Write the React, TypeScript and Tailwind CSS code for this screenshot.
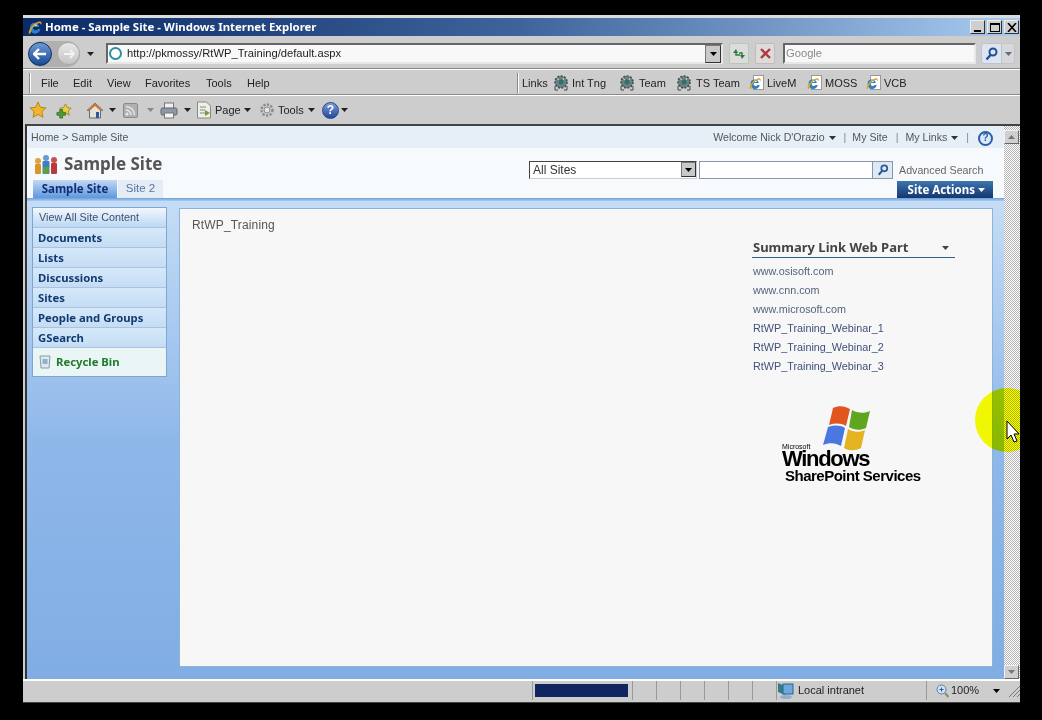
import { Fragment } from "react";

const bold = "font-['Noto_Sans',sans-serif] font-bold";

function Caret({ className = "" }: { className?: string }) {
  return (
    <svg width="7" height="4" viewBox="0 0 7 4" className={`shrink-0 ${className}`}>
      <path d="M0 0h7L3.5 4z" fill="currentColor" />
    </svg>
  );
}

function IeIcon({ size = 15 }: { size?: number }) {
  return (
    <svg width={size} height={size} viewBox="0 0 16 16" className="shrink-0">
      <path d="M2 8.5a5 5 0 0 1 10-1H5.2a3 3 0 0 0 5.4 2.2h2.5A5.4 5.4 0 0 1 2 8.5z" fill="#2f7fc8" />
      <path d="M5.4 6h4.3a2.2 2.2 0 0 0-4.3 0z" fill="#fff" />
      <path d="M1 14.5C-.5 11 6 3 11 1.8c3-.7 4.2.8 3 3.6-.4-2-1.8-2.4-3.5-1.8C7 4.8 3 10 2.8 14c-.6.8-1.4 1-1.8.5z" fill="#d9a520" />
    </svg>
  );
}

function GearPage() {
  return (
    <svg width="16" height="16" viewBox="0 0 16 16" className="shrink-0">
      <path d="M2 11v4h3M14 11v4h-3" fill="none" stroke="#444" strokeWidth="1" />
      <circle cx="8" cy="7" r="6" fill="#6d7f80" />
      <circle cx="8" cy="7" r="6" fill="none" stroke="#3e5052" strokeWidth="1.6" strokeDasharray="2 1.4" />
      <circle cx="8" cy="7" r="2.5" fill="#2f6f70" />
      <path d="M4 3.5l2 1.5M11 3l-1 2" stroke="#cfd6d6" strokeWidth="1" />
    </svg>
  );
}

function PageIe() {
  return (
    <div className="relative h-[16px] w-[16px] shrink-0">
      <div className="ml-[4px] h-[15px] w-[11px] border border-[#999] bg-white" />
      <div className="absolute left-0 top-[2px]">
        <IeIcon size={13} />
      </div>
    </div>
  );
}

function Grip() {
  return <div className="h-[20px] w-[2px] shrink-0 border-l border-r border-l-[#888] border-r-white" />;
}

function Combo({ className }: { className: string }) {
  return (
    <div className={`flex shrink-0 items-center justify-center border border-[#777] border-r-[#333] border-b-[#333] bg-[#c9c9c9] text-black ${className}`}>
      <Caret />
    </div>
  );
}

function TitleBar() {
  return (
    <div className="flex h-[18px] shrink-0 items-center bg-gradient-to-r from-[#0b2a66] via-[#3f649c] to-[#a9cdf0] pl-[5px] pr-[1px]">
      <IeIcon size={15} />
      <span className={`ml-[2px] flex-1 text-[11.4px] leading-none text-white ${bold}`}>Home - Sample Site - Windows Internet Explorer</span>
      <div className="flex gap-[2px]">
        {["min", "max", "close"].map((b) => (
          <div key={b} className="flex h-[14px] w-[15px] items-center justify-center border border-[#eee] border-r-[#333] border-b-[#333] bg-[#cfcfcf]">
            {b === "min" && <div className="mt-[7px] h-[2px] w-[7px] bg-black" />}
            {b === "max" && <div className="h-[9px] w-[10px] border border-t-2 border-black" />}
            {b === "close" && (
              <svg width="10" height="9" viewBox="0 0 10 9">
                <path d="M1 0l8 9M9 0L1 9" stroke="#000" strokeWidth="1.6" />
              </svg>
            )}
          </div>
        ))}
      </div>
    </div>
  );
}

function AddressBar() {
  return (
    <div className="flex h-[33px] shrink-0 items-center border-b border-b-[#8a8a8a] bg-[#cdcdcd] pl-[5px] pt-[3px] text-[11.2px] text-[#222]">
      <div className="flex h-[26px] w-[52px] shrink-0 items-center rounded-full bg-[#b0b0b0]">
        <div className="flex h-[24px] w-[24px] items-center justify-center rounded-full border border-[#12305f] bg-gradient-to-b from-[#6d9ad4] to-[#184a96]">
          <svg width="14" height="12" viewBox="0 0 14 12">
            <path d="M6 1L1 6l5 5M1 6h12" fill="none" stroke="#fff" strokeWidth="2.4" />
          </svg>
        </div>
        <div className="ml-[5px] flex h-[23px] w-[23px] items-center justify-center rounded-full border border-[#aaa] bg-gradient-to-b from-[#e8e8e8] to-[#c4c4c4]">
          <svg width="12" height="10" viewBox="0 0 12 10">
            <path d="M7 1l4 4-4 4M11 5H1" fill="none" stroke="#f3f3f3" strokeWidth="1.8" />
          </svg>
        </div>
      </div>
      <Caret className="ml-[7px] text-[#222]" />
      <div className="ml-[12px] flex h-[21px] w-[617px] shrink-0 items-center border-2 border-[#666] border-r-[#e8e8e8] border-b-[#e8e8e8] bg-[#f8f8f8]">
        <div className="ml-[1px] h-[13px] w-[13px] shrink-0 rounded-full border-2 border-[#2a8f9c] bg-white" />
        <span className="ml-[5px] flex-1">http://pkmossy/RtWP_Training/default.aspx</span>
        <Combo className="h-[18px] w-[16px]" />
      </div>
      <div className="ml-[6px] flex h-[21px] w-[20px] shrink-0 items-center justify-center rounded-[2px] border border-[#b8c8b8] bg-[#dcdcdc]">
        <svg width="14" height="12" viewBox="0 0 14 12">
          <path d="M1 5l3-4 2 4zM13 7l-3 4-2-4z" fill="#2f7d3a" />
          <path d="M4 5v2h4M10 7V5H7" stroke="#2f7d3a" strokeWidth="1.5" fill="none" />
        </svg>
      </div>
      <div className="ml-[6px] flex h-[21px] w-[20px] shrink-0 items-center justify-center rounded-[2px] border border-[#c8b8b8] bg-[#dcdcdc]">
        <svg width="11" height="11" viewBox="0 0 11 11">
          <path d="M1 1l9 9M10 1l-9 9" stroke="#b33a3a" strokeWidth="2.4" />
        </svg>
      </div>
      <div className="ml-[8px] flex h-[21px] w-[193px] shrink-0 items-center border-2 border-[#666] border-r-[#e8e8e8] border-b-[#e8e8e8] bg-[#f8f8f8] pl-[1px] text-[#8a8a8a]">
        Google
      </div>
      <div className="ml-[5px] flex h-[21px] w-[21px] shrink-0 items-center justify-center rounded-l-[3px] border border-[#b8c4d8] bg-[#dfe5ef]">
        <svg width="13" height="14" viewBox="0 0 13 14">
          <circle cx="8" cy="5" r="3.5" fill="none" stroke="#1f4f9a" strokeWidth="2" />
          <path d="M5.5 8L1.5 12.5" stroke="#1f4f9a" strokeWidth="2.4" />
        </svg>
      </div>
      <div className="flex h-[21px] w-[13px] shrink-0 items-center justify-center rounded-r-[3px] border border-l-0 border-[#c4c4c4] bg-[#d8d8d8] text-[#5a6f90]">
        <Caret />
      </div>
    </div>
  );
}

function MenuBar() {
  return (
    <div className="flex h-[26px] shrink-0 items-center border-b border-t border-b-[#8a8a8a] border-t-white bg-[#cdcdcd] pl-[6px] pt-[2px] text-[11px] text-[#222]">
      <Grip />
      <span className="ml-[10px] w-[32px]">File</span>
      <span className="w-[34px]">Edit</span>
      <span className="w-[38px]">View</span>
      <span className="w-[61px]">Favorites</span>
      <span className="w-[41px]">Tools</span>
      <span className="w-[270px]">Help</span>
      <Grip />
      <span className="ml-[3px] w-[31px]">Links</span>
      <div className="flex w-[66px] items-center gap-[3px]"><GearPage /><span>Int Tng</span></div>
      <div className="flex w-[57px] items-center gap-[4px]"><GearPage /><span>Team</span></div>
      <div className="flex w-[73px] items-center gap-[4px]"><GearPage /><span>TS Team</span></div>
      <div className="flex w-[58px] items-center gap-[2px]"><PageIe /><span>LiveM</span></div>
      <div className="flex w-[59px] items-center gap-[2px]"><PageIe /><span>MOSS</span></div>
      <div className="flex w-[59px] items-center gap-[2px]"><PageIe /><span>VCB</span></div>
    </div>
  );
}

function CommandBar() {
  return (
    <div className="flex h-[29px] shrink-0 items-center border-t border-t-white bg-[#cdcdcd] pl-[6px] text-[11px] text-[#222]">
      <div className="w-[27px]">
        <svg width="18" height="18" viewBox="0 0 18 18">
          <path d="M9 1l2.4 5.3 5.6.6-4.2 3.8 1.2 5.6L9 13.4l-5 2.9 1.2-5.6L1 6.9l5.6-.6z" fill="#f2b62c" stroke="#b9851a" />
        </svg>
      </div>
      <div className="w-[30px]">
        <svg width="17" height="17" viewBox="0 0 18 18">
          <path d="M10 2l2 4 4 .5-3 3 1 4.5-4-2.4-4 2.4 1-4.5-3-3L8 6z" fill="#e8cf4a" stroke="#a5891c" />
          <path d="M1 11h3V8h3v3h3v3H7v3H4v-3H1z" fill="#4f9a3a" stroke="#2c6a20" strokeWidth=".8" />
        </svg>
      </div>
      <div className="w-[23px]">
        <svg width="18" height="17" viewBox="0 0 18 17">
          <path d="M9 1L1 8.5h2.5V16h11V8.5H17z" fill="#e6e2d6" stroke="#5f6f80" />
          <path d="M9 1L1 8.5h3L9 4l5 4.5h3z" fill="#c8763a" />
          <rect x="10" y="10" width="3" height="6" fill="#2d5a96" />
        </svg>
      </div>
      <div className="w-[14px]"><Caret /></div>
      <div className="w-[24px]">
        <svg width="15" height="15" viewBox="0 0 15 15">
          <rect x=".5" y=".5" width="14" height="14" rx="1.5" fill="#b0b0b0" stroke="#8a8a8a" />
          <circle cx="4" cy="11" r="1.5" fill="#e8e8e8" />
          <path d="M3 7a5 5 0 0 1 5 5M3 3.5a8.5 8.5 0 0 1 8.5 8.5" fill="none" stroke="#e8e8e8" strokeWidth="1.5" />
        </svg>
      </div>
      <div className="w-[13px]"><Caret className="text-[#888]" /></div>
      <div className="w-[24px]">
        <svg width="18" height="17" viewBox="0 0 18 17">
          <rect x="4.5" y="1" width="9" height="6" fill="#f0f0f0" stroke="#777" />
          <rect x="1" y="6" width="16" height="7" rx="1.5" fill="#8f98a3" stroke="#5d6570" />
          <rect x="4.5" y="11" width="9" height="5" fill="#f4f4f4" stroke="#777" />
        </svg>
      </div>
      <div className="w-[12px]"><Caret /></div>
      <div className="w-[19px]">
        <svg width="16" height="18" viewBox="0 0 16 18">
          <path d="M1.5 1h9l4 4v12h-13z" fill="#efefe6" stroke="#8a8a7a" />
          <path d="M4 6h6M4 9h5M4 12h6" stroke="#6f8f9f" />
          <path d="M9 9l5 3-5 3z" fill="#7a9a3a" />
        </svg>
      </div>
      <span className="w-[29px]">Page</span>
      <div className="w-[15px]"><Caret /></div>
      <div className="w-[19px]">
        <svg width="16" height="16" viewBox="0 0 16 16">
          <circle cx="8" cy="8" r="5.5" fill="#cfcfcf" stroke="#8a8a8a" strokeWidth="2.4" strokeDasharray="2.2 1.4" />
          <circle cx="8" cy="8" r="3" fill="#e3e3e3" stroke="#8a8a8a" />
        </svg>
      </div>
      <span className="w-[30px]">Tools</span>
      <div className="w-[14px]"><Caret /></div>
      <div className="flex h-[17px] w-[17px] items-center justify-center rounded-full border border-[#2a4a8a] bg-gradient-to-b from-[#7f9cd8] to-[#23489a] text-[12px] font-bold leading-none text-white">?</div>
      <Caret className="ml-[2px]" />
    </div>
  );
}

function SiteHeader() {
  return (
    <Fragment>
      <div className="flex h-[22px] shrink-0 items-center bg-[#e6eff7] pl-[4px] pr-[11px] pt-[2px] text-[10.6px] text-[#555]">
        <span className="flex-1">Home &gt; Sample Site</span>
        <span>Welcome Nick D'Orazio</span>
        <Caret className="ml-[4px] text-[#333]" />
        <span className="ml-[8px] text-[#888]">|</span>
        <span className="ml-[6px]">My Site</span>
        <span className="ml-[8px] text-[#888]">|</span>
        <span className="ml-[7px]">My Links</span>
        <Caret className="ml-[4px] text-[#333]" />
        <span className="ml-[8px] text-[#888]">|</span>
        <div className="ml-[9px] flex h-[15px] w-[15px] items-center justify-center rounded-full border-2 border-[#2a5fa8] bg-[#dceaf7] text-[10px] font-bold leading-none text-[#2a5fa8]">?</div>
      </div>
      <div className="flex h-[32px] shrink-0 items-center bg-[#f7fafd] pl-[6px]">
        <svg width="26" height="22" viewBox="0 0 26 22" className="shrink-0">
          <circle cx="5" cy="8" r="3" fill="#e0a33a" />
          <rect x="2" y="11" width="6" height="10" rx="1" fill="#d9952c" />
          <circle cx="13" cy="5" r="3" fill="#6a9ad0" />
          <rect x="9.5" y="8" width="7" height="13" rx="1" fill="#3f7fc0" />
          <circle cx="21" cy="7" r="3" fill="#c85050" />
          <rect x="18" y="10" width="6" height="11" rx="1" fill="#b83a3a" />
          <rect x="10" y="14" width="6" height="7" fill="#5aa04a" />
        </svg>
        <span className={`mb-[2px] ml-[5px] w-[465px] shrink-0 text-[17px] leading-none text-[#555] ${bold}`}>Sample Site</span>
        <div className="mt-[11px] flex h-[18px] w-[168px] shrink-0 items-center justify-between border border-[#444] border-r-[#ccc] border-b-[#ccc] bg-white pl-[3px] text-[12px] text-[#333]">
          All Sites
          <Combo className="h-[15px] w-[15px]" />
        </div>
        <div className="ml-[2px] mt-[11px] h-[18px] w-[174px] shrink-0 border border-[#8a96a3] bg-white" />
        <div className="mt-[11px] flex h-[18px] w-[20px] shrink-0 items-center justify-center border border-l-0 border-[#8a96a3] bg-[#dde9f5]">
          <svg width="12" height="12" viewBox="0 0 13 14">
            <circle cx="8" cy="5" r="3.5" fill="none" stroke="#2a5a94" strokeWidth="2" />
            <path d="M5.5 8L1.5 12.5" stroke="#2a5a94" strokeWidth="2.4" />
          </svg>
        </div>
        <span className="ml-[6px] mt-[12px] whitespace-nowrap text-[10.7px] text-[#666]">Advanced Search</span>
      </div>
      <div className="flex h-[18px] shrink-0 items-end bg-[#f7fafd] pl-[6px] pr-[11px]">
        <div className={`flex h-[18px] w-[84px] items-center justify-center bg-gradient-to-b from-[#c3d9f3] to-[#5f97de] text-[11.5px] text-[#0f2f78] ${bold}`}>Sample Site</div>
        <div className="ml-[1px] flex h-[18px] w-[45px] items-center justify-center bg-[#e4edf6] text-[11.5px] text-[#56749c]">Site 2</div>
        <div className={`ml-auto flex h-[17px] w-[96px] items-center justify-end gap-[3px] bg-gradient-to-b from-[#3f75b0] to-[#14376f] pr-[8px] text-[11.5px] text-white ${bold}`}>
          Site Actions
          <Caret />
        </div>
      </div>
      <div className="h-[3px] shrink-0 bg-gradient-to-b from-[#6f9fdc] to-[#a9ccf1]" />
    </Fragment>
  );
}

function SideNav() {
  const links = ["Documents", "Lists", "Discussions", "Sites", "People and Groups", "GSearch"];
  return (
    <div className="mt-[6px] w-[135px] shrink-0 self-start border border-[#7fa6d0] text-[11.3px] leading-none">
      <div className="flex h-[20px] items-center border-b border-b-[#a8c4de] bg-gradient-to-b from-[#f2f7fc] to-[#bcd8f3] pl-[6px] text-[10.8px] text-[#3d5070]">View All Site Content</div>
      {links.map((l) => (
        <div key={l} className={`flex h-[20px] items-center border-b border-b-[#a8c4de] bg-gradient-to-b from-[#d6e9fa] to-[#c4dcf4] pl-[5px] text-[#123a72] ${bold}`}>
          {l}
        </div>
      ))}
      <div className={`flex h-[28px] items-center bg-[#eaf6f6] pl-[6px] text-[#1f7a2a] ${bold}`}>
        <svg width="12" height="14" viewBox="0 0 12 14" className="shrink-0">
          <path d="M1 1h10l-1 12H2z" fill="#dfe8ee" stroke="#8a9aa6" />
          <rect x="3.5" y="4" width="5" height="5" fill="#8fb0cc" />
        </svg>
        <span className="ml-[5px]">Recycle Bin</span>
      </div>
    </div>
  );
}

function WindowsLogo() {
  return (
    <div className="ml-[30px] mt-[30px] text-black">
      <svg width="52" height="46" viewBox="0 0 52 46" className="ml-[39px]">
        <path d="M12 2c6-3 12-2 17 1l-4 17c-5-3-11-3-17-1z" fill="#e0561e" />
        <path d="M31 4c5 3 12 4 18 1l-4 17c-6 3-12 2-17-1z" fill="#5fa51e" />
        <path d="M7 21c6-2 12-2 17 1l-4 18c-5-3-11-4-18-1z" fill="#4a78e0" />
        <path d="M27 23c5 3 11 4 17 1l-4 18c-6 3-12 3-17 0z" fill="#e3b420" />
      </svg>
      <div className="-mt-[9px]">
        <div className="text-[7px] leading-[7px]">Microsoft</div>
        <div className="text-[22px] font-bold leading-[18px] tracking-[-1.3px]">Windows</div>
        <div className="ml-[3px] whitespace-nowrap text-[15px] font-bold leading-[16px] tracking-[-0.5px]">SharePoint Services</div>
      </div>
    </div>
  );
}

function Panel() {
  const links = ["www.osisoft.com", "www.cnn.com", "www.microsoft.com", "RtWP_Training_Webinar_1", "RtWP_Training_Webinar_2", "RtWP_Training_Webinar_3"];
  return (
    <div className="mb-[12px] ml-[12px] mt-[7px] flex flex-1 justify-between border border-[#8ab4d8] bg-[#f7f7f8] pl-[12px] pr-[37px] pt-[7px]">
      <span className="text-[12px] tracking-[0.15px] text-[#555]">RtWP_Training</span>
      <div className="mt-[22px] w-[203px]">
        <div className={`flex h-[20px] items-center justify-between border-b border-b-[#2d5f80] pl-[1px] pr-[6px] text-[13px] text-[#444] ${bold}`}>
          Summary Link Web Part
          <Caret className="text-[#444]" />
        </div>
        <div className="mt-[4px] flex flex-col pl-[1px] text-[10.8px] leading-[19px]">
          {links.map((l, i) => (
            <span key={l} className={i < 3 ? "text-[#55647c]" : "text-[#3f5078]"}>{l}</span>
          ))}
        </div>
        <WindowsLogo />
      </div>
    </div>
  );
}

function Scrollbar() {
  return (
    <div className="flex w-[16px] shrink-0 flex-col justify-between bg-[repeating-conic-gradient(#ffffff_0_25%,#b4b4b4_0_50%)] bg-[length:2px_2px] pt-[4px]">
      {["up", "down"].map((d) => (
        <div key={d} className="flex h-[14px] w-[15px] items-center justify-center border border-[#f0f0f0] border-r-[#666] border-b-[#666] bg-[#cfcfcf] text-[#777]">
          <Caret className={d === "up" ? "rotate-180" : ""} />
        </div>
      ))}
    </div>
  );
}

function StatusBar() {
  return (
    <div className="flex h-[24px] shrink-0 items-center border-b border-t-2 border-b-[#444] border-t-white bg-[#cdcdcd] pb-[2px] text-[11px] text-[#222]">
      <div className="h-full w-[510px] shrink-0 border-r border-r-[#999]" />
      <div className="ml-[2px] h-[13px] w-[93px] shrink-0 bg-[#10255f]" />
      <div className="ml-[4px] flex h-full">
        {[0, 1, 2, 3, 4, 5].map((i) => (
          <div key={i} className="h-full w-[24px] border-l border-l-[#999]" />
        ))}
      </div>
      <div className="flex h-full w-[150px] shrink-0 items-center border-l border-l-[#999]">
        <svg width="17" height="18" viewBox="0 0 17 18" className="shrink-0">
          <path d="M1 1l7 3v9L1 10z" fill="#2f7d8a" />
          <rect x="6" y="2" width="10" height="10" fill="#6fa8dc" stroke="#35618c" />
          <ellipse cx="9" cy="15" rx="6" ry="2" fill="#8fb0cc" />
        </svg>
        <span className="ml-[4px]">Local intranet</span>
      </div>
      <div className="flex h-full flex-1 items-center border-l border-l-[#999] pl-[9px]">
        <svg width="13" height="14" viewBox="0 0 13 14" className="shrink-0">
          <circle cx="5.5" cy="5.5" r="4.5" fill="#cfe0f2" stroke="#5a7fa8" />
          <path d="M3.5 5.5h4M5.5 3.5v4" stroke="#2a5a94" />
          <path d="M9 9l3.5 4" stroke="#8a8a7a" strokeWidth="2" />
        </svg>
        <span className="ml-[2px] w-[42px]">100%</span>
        <Caret className="text-black" />
        <svg width="12" height="14" viewBox="0 0 12 14" className="ml-auto">
          <path d="M1 13L12 2M5 13l7-7M9 13l3-3" stroke="#777" strokeWidth="1" />
        </svg>
      </div>
    </div>
  );
}

export default function App() {
  return (
    <div className="h-[720px] w-[1042px] overflow-hidden bg-black pl-[23px] pt-[15px] font-['Liberation_Sans',sans-serif]">
      <div className="relative flex h-[688px] w-[997px] flex-col overflow-hidden border-t-[3px] border-t-[#dcdcdc] bg-[#cdcdcd]">
        <TitleBar />
        <AddressBar />
        <MenuBar />
        <CommandBar />
        <div className="ml-[2px] flex min-h-0 flex-1 border-l-[2px] border-t-[2px] border-l-[#333] border-t-[#444]">
          <div className="flex min-w-0 flex-1 flex-col">
            <SiteHeader />
            <div className="flex flex-1 bg-gradient-to-b from-[#c5dcf5] via-[#8fb8ea] to-[#80ade4] pl-[5px] pr-[11px]">
              <SideNav />
              <Panel />
            </div>
          </div>
          <Scrollbar />
        </div>
        <StatusBar />
        {/* presenter's cursor highlight */}
        <div className="absolute left-[952px] top-[370px] h-[64px] w-[64px] rounded-full bg-[#f8ff00] mix-blend-multiply" />
        <svg width="14" height="24" viewBox="0 0 14 24" className="absolute left-[983px] top-[402px]">
          <path d="M1 1v18l4-4 3 7 3-1-3-7h5z" fill="#fff" stroke="#000" />
        </svg>
      </div>
    </div>
  );
}
